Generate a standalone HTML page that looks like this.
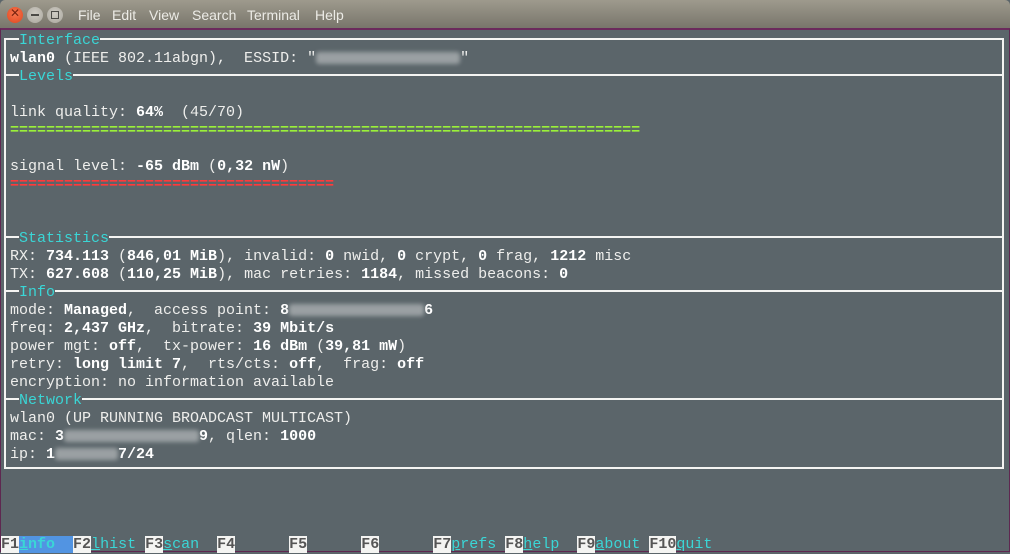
<!DOCTYPE html>
<html><head><meta charset="utf-8"><style>
*{margin:0;padding:0;box-sizing:border-box}
body{width:1010px;height:552px;overflow:hidden;background:#5b656a;font-family:"Liberation Mono",monospace;font-size:15px;position:relative}
#tb{position:absolute;left:0;top:0;width:1010px;height:29px;background:linear-gradient(#9e9a8d,#77746a);border-radius:5px 5px 0 0}
#tb .m{position:absolute;top:7px;font-family:"Liberation Sans",sans-serif;font-size:14px;color:#ecebe6}
.btn{position:absolute;top:7px;width:16px;height:16px;border-radius:50%}
#pl{position:absolute;left:0;top:28px;width:1010px;height:524px;border:1px solid #5e2750;border-top:2px solid #6b2a5c}
.r{position:absolute;left:1px;height:18px;line-height:18px;white-space:pre;color:#eeeeec;transform:translateY(2px)}
b{color:#fff}
.g{color:#9af03a;font-weight:bold}.rd{color:#ff3a3a;font-weight:bold}
.h{position:absolute;height:2px;background:#f4f4f2}
.v{position:absolute;width:2px;background:#f4f4f2}
.lab{position:absolute;height:16px;line-height:18px;background:#5b656a;color:#3ad6d6;white-space:pre;transform:translateY(2px)}
.bl{display:inline-block;height:12px;vertical-align:middle;background:#9aa0a3;filter:blur(2px);border-radius:3px}
.fk{background:#f4f4f2;color:#555;font-weight:bold}
.fl{color:#3ad6d6}
</style></head><body>
<div id="tb">
<div class="btn" style="left:7px;background:radial-gradient(circle at 50% 40%,#f7764f,#e0461e)"><span style="position:absolute;left:3px;top:-1px;font-size:12px;color:#7a2410;font-family:'DejaVu Sans'">✕</span></div>
<div class="btn" style="left:27px;background:radial-gradient(circle at 50% 40%,#cfccc4,#a9a69d)"><div style="position:absolute;left:4px;top:7px;width:8px;height:2px;background:#4c4b47"></div></div>
<div class="btn" style="left:47px;background:radial-gradient(circle at 50% 40%,#cfccc4,#a9a69d)"><div style="position:absolute;left:4px;top:4px;width:8px;height:8px;border:1.5px solid #4c4b47"></div></div>
<span class="m" style="left:78px">File</span><span class="m" style="left:112px">Edit</span><span class="m" style="left:149px">View</span><span class="m" style="left:192px">Search</span><span class="m" style="left:247px">Terminal</span><span class="m" style="left:315px">Help</span>
</div>
<div id="pl"></div>

<div class="v" style="left:4px;top:38px;height:431px"></div>
<div class="v" style="left:1002px;top:38px;height:431px"></div>
<div class="h" style="left:4px;top:38px;width:1000px"></div>
<div class="h" style="left:4px;top:74px;width:1000px"></div>
<div class="h" style="left:4px;top:236px;width:1000px"></div>
<div class="h" style="left:4px;top:290px;width:1000px"></div>
<div class="h" style="left:4px;top:398px;width:1000px"></div>
<div class="h" style="left:4px;top:467px;width:1000px"></div>
<div class="lab" style="left:19px;top:30px">Interface</div>
<div class="lab" style="left:19px;top:66px">Levels</div>
<div class="lab" style="left:19px;top:228px">Statistics</div>
<div class="lab" style="left:19px;top:282px">Info</div>
<div class="lab" style="left:19px;top:390px">Network</div>

<div class="r" style="top:48px"> <b>wlan0</b> (IEEE 802.11abgn),  ESSID: "<span class="bl" style="width:144px"></span>"</div>
<div class="r" style="top:102px"> link quality: <b>64%</b>  (45/70)</div>
<div class="r g" style="top:120px"> ======================================================================</div>
<div class="r" style="top:156px"> signal level: <b>-65 dBm</b> (<b>0,32 nW</b>)</div>
<div class="r rd" style="top:174px"> ====================================</div>
<div class="r" style="top:246px"> RX: <b>734.113</b> (<b>846,01 MiB</b>), invalid: <b>0</b> nwid, <b>0</b> crypt, <b>0</b> frag, <b>1212</b> misc</div>
<div class="r" style="top:264px"> TX: <b>627.608</b> (<b>110,25 MiB</b>), mac retries: <b>1184</b>, missed beacons: <b>0</b></div>
<div class="r" style="top:300px"> mode: <b>Managed</b>,  access point: <b>8</b><span class="bl" style="width:135px"></span><b>6</b></div>
<div class="r" style="top:318px"> freq: <b>2,437 GHz</b>,  bitrate: <b>39 Mbit/s</b></div>
<div class="r" style="top:336px"> power mgt: <b>off</b>,  tx-power: <b>16 dBm</b> (<b>39,81 mW</b>)</div>
<div class="r" style="top:354px"> retry: <b>long limit 7</b>,  rts/cts: <b>off</b>,  frag: <b>off</b></div>
<div class="r" style="top:372px"> encryption: no information available</div>
<div class="r" style="top:408px"> wlan0 (UP RUNNING BROADCAST MULTICAST)</div>
<div class="r" style="top:426px"> mac: <b>3</b><span class="bl" style="width:135px"></span><b>9</b>, qlen: <b>1000</b></div>
<div class="r" style="top:444px"> ip: <b>1</b><span class="bl" style="width:63px"></span><b>7/24</b></div>

<div class="r" style="top:534px;left:1px"><span class="fk">F1</span><span class="fl" style="background:#5294e2;font-weight:bold;text-decoration:underline">i</span><span class="fl" style="background:#5294e2;font-weight:bold">nfo  </span><span class="fk">F2</span><span class="fl"><u>l</u>hist </span><span class="fk">F3</span><span class="fl"><u>s</u>can  </span><span class="fk">F4</span>      <span class="fk">F5</span>      <span class="fk">F6</span>      <span class="fk">F7</span><span class="fl"><u>p</u>refs </span><span class="fk">F8</span><span class="fl"><u>h</u>elp  </span><span class="fk">F9</span><span class="fl"><u>a</u>bout </span><span class="fk">F10</span><span class="fl"><u>q</u>uit</span></div>
</body></html>
